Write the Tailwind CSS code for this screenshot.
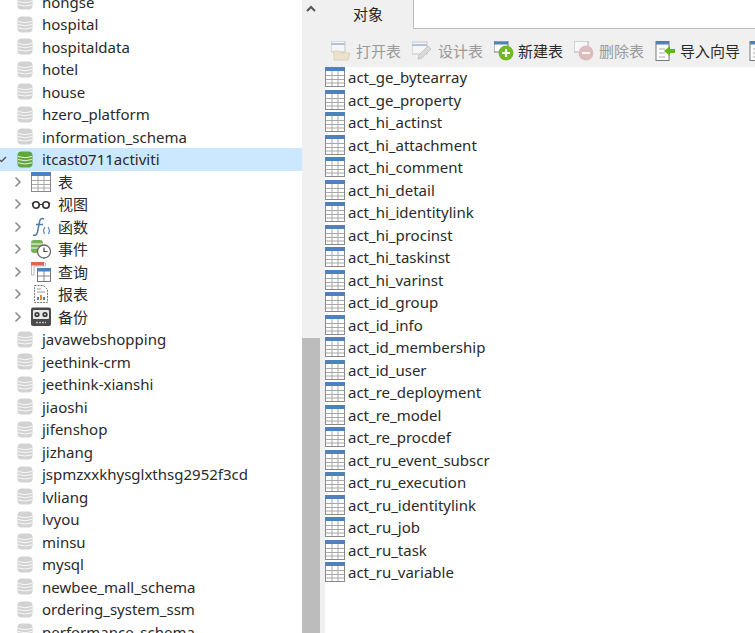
<!DOCTYPE html>
<html lang="en">
  <head>
    <meta charset="UTF-8" />
    <title>Navicat</title>
    <script src="https://cdn.jsdelivr.net/npm/@tailwindcss/browser@4"></script>
  </head>
  <body class="bg-white overflow-hidden">
    <!-- shared icons -->
    <svg class="hidden">
      <symbol id="db" viewBox="0 0 16 17">
        <rect x="0.5" y="0.5" width="15" height="16" rx="4" fill="currentColor" />
        <path d="M1 5.5q7 2.5 14 0M1 8.5q7 2.5 14 0M1 11.8q7 2.5 14 0" fill="none" stroke="#fff" stroke-width="1" opacity="0.85" />
      </symbol>
      <symbol id="tbl" viewBox="0 0 20 20">
        <rect x="0.5" y="0.5" width="19" height="19" fill="#fff" stroke="#8a8a8a" />
        <rect x="0" y="0" width="20" height="4" fill="#4f81bd" />
        <path d="M1 8.5h18M1 12.5h18M1 16h18M7 4v15M13 4v15" stroke="#a8a8a8" stroke-width="1" />
      </symbol>
      <symbol id="chev" viewBox="0 0 8 12">
        <path d="M1.5 1.5 6 6l-4.500 4.500" fill="none" stroke="#8c8c8c" stroke-width="1.600" />
      </symbol>
    </svg>

    <div class="flex w-[755px] h-[633px] overflow-hidden font-['Noto_Sans','Noto_Sans_CJK_SC',sans-serif] text-[15px] text-[#2a2a2a]">
      <!-- Database tree -->
      <div class="w-[302px] shrink-0 overflow-hidden -mt-[9.500px]">
        <div class="flex items-center h-[22.500px] pl-[17px] gap-[9px]"><svg class="w-4 h-[17px] text-[#d2d2d2]"><use href="#db" /></svg><span>hongse</span></div>
        <div class="flex items-center h-[22.500px] pl-[17px] gap-[9px]"><svg class="w-4 h-[17px] text-[#d2d2d2]"><use href="#db" /></svg><span>hospital</span></div>
        <div class="flex items-center h-[22.500px] pl-[17px] gap-[9px]"><svg class="w-4 h-[17px] text-[#d2d2d2]"><use href="#db" /></svg><span>hospitaldata</span></div>
        <div class="flex items-center h-[22.500px] pl-[17px] gap-[9px]"><svg class="w-4 h-[17px] text-[#d2d2d2]"><use href="#db" /></svg><span>hotel</span></div>
        <div class="flex items-center h-[22.500px] pl-[17px] gap-[9px]"><svg class="w-4 h-[17px] text-[#d2d2d2]"><use href="#db" /></svg><span>house</span></div>
        <div class="flex items-center h-[22.500px] pl-[17px] gap-[9px]"><svg class="w-4 h-[17px] text-[#d2d2d2]"><use href="#db" /></svg><span>hzero_platform</span></div>
        <div class="flex items-center h-[22.500px] pl-[17px] gap-[9px]"><svg class="w-4 h-[17px] text-[#d2d2d2]"><use href="#db" /></svg><span>information_schema</span></div>

        <!-- open database -->
        <div class="flex items-center h-[22.500px] bg-[#cce8ff]">
          <svg class="w-[17px] h-[10px]" viewBox="0 0 17 10"><path d="M0 6l1.500 1.500L6 3" fill="none" stroke="#555" stroke-width="1.500" /></svg>
          <svg class="w-4 h-[17px] text-[#5fa73c] mr-[9px]"><use href="#db" /></svg><span>itcast0711activiti</span>
        </div>
        <div class="flex items-center h-[22.500px] pl-[14px]">
          <svg class="w-2 h-3"><use href="#chev" /></svg>
          <svg class="w-5 h-5 ml-[9px] mr-[7px]"><use href="#tbl" /></svg><span>表</span>
        </div>
        <div class="flex items-center h-[22.500px] pl-[14px]">
          <svg class="w-2 h-3"><use href="#chev" /></svg>
          <svg class="w-5 h-5 ml-[9px] mr-[7px]" viewBox="0 0 20 20"><circle cx="5" cy="11" r="3.200" fill="none" stroke="#333" stroke-width="1.600" /><circle cx="15" cy="11" r="3.200" fill="none" stroke="#333" stroke-width="1.600" /><path d="M8 10.500h4M1 10l1-1M19 10l-1-1" stroke="#333" stroke-width="1.200" /></svg><span>视图</span>
        </div>
        <div class="flex items-center h-[22.500px] pl-[14px]">
          <svg class="w-2 h-3"><use href="#chev" /></svg>
          <svg class="w-5 h-5 ml-[9px] mr-[7px]" viewBox="0 0 20 20"><path d="M13 2C10 .5 9 2.500 8.500 5L6.500 15C6 17.500 4.500 19 2 18M5 7.500h7" fill="none" stroke="#4f7ba8" stroke-width="1.500" /><path d="M14 10c-1.500 2-1.500 5-.5 7M17 10c1.500 2 1.500 5 .5 7" fill="none" stroke="#4f7ba8" stroke-width="1.100" /></svg><span>函数</span>
        </div>
        <div class="flex items-center h-[22.500px] pl-[14px]">
          <svg class="w-2 h-3"><use href="#chev" /></svg>
          <svg class="w-5 h-5 ml-[9px] mr-[7px]" viewBox="0 0 20 20"><rect x="0" y="1" width="12" height="13" rx="3" fill="#76b255" /><path d="M0 5h12M0 9h12" stroke="#fff" /><circle cx="13" cy="12.500" r="6.500" fill="#fff" stroke="#666" stroke-width="1.300" /><path d="M13 8.500v4h3.500" fill="none" stroke="#444" stroke-width="1.200" /></svg><span>事件</span>
        </div>
        <div class="flex items-center h-[22.500px] pl-[14px]">
          <svg class="w-2 h-3"><use href="#chev" /></svg>
          <svg class="w-5 h-5 ml-[9px] mr-[7px]" viewBox="0 0 20 20"><path d="M.5 1h14v3H3v9H.5z" fill="#fff" stroke="#aaa" stroke-width=".8" /><rect x="0" y="0" width="13" height="3.500" fill="#d9694f" /><rect x="6.500" y="6.500" width="13" height="13" fill="#fff" stroke="#777" /><rect x="6" y="6" width="14" height="3.500" fill="#4f81bd" /><path d="M7 14h12M13 9v10" stroke="#888" /></svg><span>查询</span>
        </div>
        <div class="flex items-center h-[22.500px] pl-[14px]">
          <svg class="w-2 h-3"><use href="#chev" /></svg>
          <svg class="w-5 h-5 ml-[9px] mr-[7px]" viewBox="0 0 20 20"><path d="M3.500 1.500h9l4 4v13h-13z" fill="#fff" stroke="#777" stroke-dasharray="2 1" /><path d="M6 5h4M6 8h8" stroke="#999" /><path d="M7 16v-3" stroke="#4f81bd" stroke-width="2" /><path d="M10 16v-5" stroke="#e08a3c" stroke-width="2" /><path d="M13 16v-3" stroke="#4f81bd" stroke-width="2" /></svg><span>报表</span>
        </div>
        <div class="flex items-center h-[22.500px] pl-[14px]">
          <svg class="w-2 h-3"><use href="#chev" /></svg>
          <svg class="w-5 h-5 ml-[9px] mr-[7px]" viewBox="0 0 20 20"><rect x="0" y="0.500" width="20" height="18.500" rx="2" fill="#4a4a4a" /><rect x="2" y="3" width="16" height="9" rx="1" fill="#e8e8e8" /><circle cx="6" cy="7.500" r="2.600" fill="#333" /><circle cx="14" cy="7.500" r="2.600" fill="#333" /><circle cx="6" cy="7.500" r="1" fill="#ddd" /><circle cx="14" cy="7.500" r="1" fill="#ddd" /><path d="M5 15.500h10" stroke="#bbb" stroke-width="1.500" stroke-dasharray="2 1" /></svg><span>备份</span>
        </div>

        <div class="flex items-center h-[22.500px] pl-[17px] gap-[9px]"><svg class="w-4 h-[17px] text-[#d2d2d2]"><use href="#db" /></svg><span>javawebshopping</span></div>
        <div class="flex items-center h-[22.500px] pl-[17px] gap-[9px]"><svg class="w-4 h-[17px] text-[#d2d2d2]"><use href="#db" /></svg><span>jeethink-crm</span></div>
        <div class="flex items-center h-[22.500px] pl-[17px] gap-[9px]"><svg class="w-4 h-[17px] text-[#d2d2d2]"><use href="#db" /></svg><span>jeethink-xianshi</span></div>
        <div class="flex items-center h-[22.500px] pl-[17px] gap-[9px]"><svg class="w-4 h-[17px] text-[#d2d2d2]"><use href="#db" /></svg><span>jiaoshi</span></div>
        <div class="flex items-center h-[22.500px] pl-[17px] gap-[9px]"><svg class="w-4 h-[17px] text-[#d2d2d2]"><use href="#db" /></svg><span>jifenshop</span></div>
        <div class="flex items-center h-[22.500px] pl-[17px] gap-[9px]"><svg class="w-4 h-[17px] text-[#d2d2d2]"><use href="#db" /></svg><span>jizhang</span></div>
        <div class="flex items-center h-[22.500px] pl-[17px] gap-[9px]"><svg class="w-4 h-[17px] text-[#d2d2d2]"><use href="#db" /></svg><span>jspmzxxkhysglxthsg2952f3cd</span></div>
        <div class="flex items-center h-[22.500px] pl-[17px] gap-[9px]"><svg class="w-4 h-[17px] text-[#d2d2d2]"><use href="#db" /></svg><span>lvliang</span></div>
        <div class="flex items-center h-[22.500px] pl-[17px] gap-[9px]"><svg class="w-4 h-[17px] text-[#d2d2d2]"><use href="#db" /></svg><span>lvyou</span></div>
        <div class="flex items-center h-[22.500px] pl-[17px] gap-[9px]"><svg class="w-4 h-[17px] text-[#d2d2d2]"><use href="#db" /></svg><span>minsu</span></div>
        <div class="flex items-center h-[22.500px] pl-[17px] gap-[9px]"><svg class="w-4 h-[17px] text-[#d2d2d2]"><use href="#db" /></svg><span>mysql</span></div>
        <div class="flex items-center h-[22.500px] pl-[17px] gap-[9px]"><svg class="w-4 h-[17px] text-[#d2d2d2]"><use href="#db" /></svg><span>newbee_mall_schema</span></div>
        <div class="flex items-center h-[22.500px] pl-[17px] gap-[9px]"><svg class="w-4 h-[17px] text-[#d2d2d2]"><use href="#db" /></svg><span>ordering_system_ssm</span></div>
        <div class="flex items-center h-[22.500px] pl-[17px] gap-[9px]"><svg class="w-4 h-[17px] text-[#d2d2d2]"><use href="#db" /></svg><span>performance_schema</span></div>
      </div>

      <!-- Scrollbar -->
      <div class="w-[23px] shrink-0 bg-[#f0f0f0] flex flex-col">
        <svg class="w-[18px] h-[18px]" viewBox="0 0 18 18"><path d="M5 11l4-4 4 4" fill="none" stroke="#555" stroke-width="2" /></svg>
        <div class="mt-[320px] w-[18px] h-[295px] bg-[#bcbcbc]"></div>
      </div>

      <!-- Objects pane -->
      <div class="flex-1 min-w-0">
        <div class="flex h-[29px] bg-[#f0f0f0]">
          <div class="w-[88px] flex items-center justify-center pr-[2px] text-[#222]">对象</div>
          <div class="flex-1 bg-white border-l border-b border-[#bdbdbd] h-[29px]"></div>
        </div>

        <!-- Toolbar -->
        <div class="flex items-center h-[38px] bg-[#f0f0f0] pl-[6px] pt-[6px] whitespace-nowrap overflow-hidden">
          <svg class="w-[20px] h-[20px] mr-[5px] shrink-0 opacity-40" viewBox="0 0 20 20"><rect x="0" y="0" width="14" height="11" fill="#fff" stroke="#888" /><path d="M0 3h14" stroke="#4f81bd" stroke-width="2" /><path d="M3 10h5l2 2h9l-2 7H3z" fill="#e8cf95" stroke="#b59b5d" stroke-width=".8" /></svg>
          <span class="text-[#9a9a9a] mr-[11px]">打开表</span>
          <svg class="w-[20px] h-[20px] mr-[6px] shrink-0 opacity-40" viewBox="0 0 20 20"><rect x="0" y="1" width="15" height="12" fill="#fff" stroke="#888" /><path d="M0 4h15" stroke="#4f81bd" stroke-width="2" /><path d="M6 18l1-4 9-9 3 3-9 9z" fill="#bbb" stroke="#777" stroke-width=".8" /></svg>
          <span class="text-[#9a9a9a] mr-[11px]">设计表</span>
          <svg class="w-[20px] h-[20px] mr-[4px] shrink-0" viewBox="0 0 20 20"><rect x="0" y="0" width="14" height="11" fill="#fff" stroke="#777" /><path d="M0 2h14" stroke="#4f81bd" stroke-width="3" /><circle cx="12" cy="12" r="7.500" fill="#6fbb1f" /><path d="M12 8v8M8 12h8" stroke="#fff" stroke-width="2.200" /></svg>
          <span class="text-[#2a2a2a] mr-[11px]">新建表</span>
          <svg class="w-[20px] h-[20px] mr-[5px] shrink-0 opacity-50" viewBox="0 0 20 20"><rect x="0" y="0" width="14" height="11" fill="#fff" stroke="#777" /><circle cx="12" cy="12" r="7.500" fill="#c98a8a" /><path d="M8 12h8" stroke="#fff" stroke-width="2.200" /></svg>
          <span class="text-[#9a9a9a] mr-[11px]">删除表</span>
          <svg class="w-[20px] h-[20px] mr-[5px] shrink-0" viewBox="0 0 20 20"><rect x="1" y="0.500" width="13" height="19" fill="#fff" stroke="#777" /><path d="M1 2h13" stroke="#4f81bd" stroke-width="3" /><path d="M4 8h6M4 12h6M4 16h6" stroke="#aaa" /><path d="M9 10l6-5v3h5v4h-5v3z" fill="#63b51c" /></svg>
          <span class="text-[#2a2a2a] mr-[9px]">导入向导</span>
          <svg class="w-[20px] h-[20px] shrink-0" viewBox="0 0 20 20"><rect x="1" y="0.500" width="13" height="19" fill="#fff" stroke="#777" /><path d="M1 2h13" stroke="#4f81bd" stroke-width="3" /><path d="M4 8h7M4 12h7M4 16h7" stroke="#aaa" /></svg>
        </div>

        <!-- Table list -->
        <div class="-mt-[1px]">
          <div class="flex items-center h-[22.500px] gap-[3px]"><svg class="w-5 h-5"><use href="#tbl" /></svg><span>act_ge_bytearray</span></div>
          <div class="flex items-center h-[22.500px] gap-[3px]"><svg class="w-5 h-5"><use href="#tbl" /></svg><span>act_ge_property</span></div>
          <div class="flex items-center h-[22.500px] gap-[3px]"><svg class="w-5 h-5"><use href="#tbl" /></svg><span>act_hi_actinst</span></div>
          <div class="flex items-center h-[22.500px] gap-[3px]"><svg class="w-5 h-5"><use href="#tbl" /></svg><span>act_hi_attachment</span></div>
          <div class="flex items-center h-[22.500px] gap-[3px]"><svg class="w-5 h-5"><use href="#tbl" /></svg><span>act_hi_comment</span></div>
          <div class="flex items-center h-[22.500px] gap-[3px]"><svg class="w-5 h-5"><use href="#tbl" /></svg><span>act_hi_detail</span></div>
          <div class="flex items-center h-[22.500px] gap-[3px]"><svg class="w-5 h-5"><use href="#tbl" /></svg><span>act_hi_identitylink</span></div>
          <div class="flex items-center h-[22.500px] gap-[3px]"><svg class="w-5 h-5"><use href="#tbl" /></svg><span>act_hi_procinst</span></div>
          <div class="flex items-center h-[22.500px] gap-[3px]"><svg class="w-5 h-5"><use href="#tbl" /></svg><span>act_hi_taskinst</span></div>
          <div class="flex items-center h-[22.500px] gap-[3px]"><svg class="w-5 h-5"><use href="#tbl" /></svg><span>act_hi_varinst</span></div>
          <div class="flex items-center h-[22.500px] gap-[3px]"><svg class="w-5 h-5"><use href="#tbl" /></svg><span>act_id_group</span></div>
          <div class="flex items-center h-[22.500px] gap-[3px]"><svg class="w-5 h-5"><use href="#tbl" /></svg><span>act_id_info</span></div>
          <div class="flex items-center h-[22.500px] gap-[3px]"><svg class="w-5 h-5"><use href="#tbl" /></svg><span>act_id_membership</span></div>
          <div class="flex items-center h-[22.500px] gap-[3px]"><svg class="w-5 h-5"><use href="#tbl" /></svg><span>act_id_user</span></div>
          <div class="flex items-center h-[22.500px] gap-[3px]"><svg class="w-5 h-5"><use href="#tbl" /></svg><span>act_re_deployment</span></div>
          <div class="flex items-center h-[22.500px] gap-[3px]"><svg class="w-5 h-5"><use href="#tbl" /></svg><span>act_re_model</span></div>
          <div class="flex items-center h-[22.500px] gap-[3px]"><svg class="w-5 h-5"><use href="#tbl" /></svg><span>act_re_procdef</span></div>
          <div class="flex items-center h-[22.500px] gap-[3px]"><svg class="w-5 h-5"><use href="#tbl" /></svg><span>act_ru_event_subscr</span></div>
          <div class="flex items-center h-[22.500px] gap-[3px]"><svg class="w-5 h-5"><use href="#tbl" /></svg><span>act_ru_execution</span></div>
          <div class="flex items-center h-[22.500px] gap-[3px]"><svg class="w-5 h-5"><use href="#tbl" /></svg><span>act_ru_identitylink</span></div>
          <div class="flex items-center h-[22.500px] gap-[3px]"><svg class="w-5 h-5"><use href="#tbl" /></svg><span>act_ru_job</span></div>
          <div class="flex items-center h-[22.500px] gap-[3px]"><svg class="w-5 h-5"><use href="#tbl" /></svg><span>act_ru_task</span></div>
          <div class="flex items-center h-[22.500px] gap-[3px]"><svg class="w-5 h-5"><use href="#tbl" /></svg><span>act_ru_variable</span></div>
        </div>
      </div>
    </div>
  </body>
</html>
